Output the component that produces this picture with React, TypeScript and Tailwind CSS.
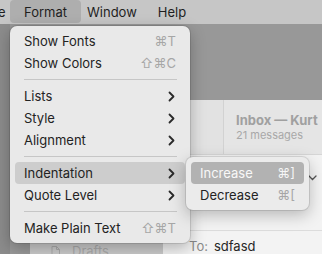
import { ReactNode } from 'react'

type MenuRow =
  | { kind: 'item'; label: string; shortcut?: string; submenu?: boolean; active?: boolean }
  | { kind: 'sep' }

const formatMenu: MenuRow[] = [
  { kind: 'item', label: 'Show Fonts', shortcut: '⌘T' },
  { kind: 'item', label: 'Show Colors', shortcut: '⇧⌘C' },
  { kind: 'sep' },
  { kind: 'item', label: 'Lists', submenu: true },
  { kind: 'item', label: 'Style', submenu: true },
  { kind: 'item', label: 'Alignment', submenu: true },
  { kind: 'sep' },
  { kind: 'item', label: 'Indentation', submenu: true, active: true },
  { kind: 'item', label: 'Quote Level', submenu: true },
  { kind: 'sep' },
  { kind: 'item', label: 'Make Plain Text', shortcut: '⇧⌘T' },
]

function Chevron() {
  return (
    <svg width="7" height="11" viewBox="0 0 7 11" className="mr-[1px]" aria-hidden="true">
      <polyline points="1.5,1.5 5.5,5.5 1.5,9.5" fill="none" stroke="#2a2a2a" strokeWidth="1.8" strokeLinecap="round" strokeLinejoin="round" />
    </svg>
  )
}

function Shortcut({ children, light }: { children: ReactNode; light?: boolean }) {
  return (
    <span className={light ? 'text-[#f6f6f6]' : 'text-[#a6a6a6]'} style={{ fontFamily: 'Inter, "DejaVu Sans", sans-serif' }}>
      {children}
    </span>
  )
}

function FileIcon() {
  return (
    <svg width="9" height="11" viewBox="0 0 9 11" aria-hidden="true">
      <path d="M1 0.5h4.5l3 3v7h-7.5z M5.5 0.5v3h3" fill="none" stroke="#ababab" strokeWidth="1" />
    </svg>
  )
}

export default function App() {
  return (
    <div
      className="relative h-[254px] w-[322px] overflow-hidden bg-[#8c8c8c] text-[13px] leading-4 text-[#232323]"
      style={{ fontFamily: 'Inter, "Liberation Sans", sans-serif' }}
    >
      {/* menu bar */}
      <div className="flex h-[24px] items-center bg-[#c6c6c6] text-[#1f1f1f]">
        <span className="-ml-[2px] w-[12px]">e</span>
        <span className="flex h-[23px] items-center self-start rounded-[4px] bg-[#aeaeae] px-[14px]">Format</span>
        <span className="ml-[6px]">Window</span>
        <span className="ml-[21px]">Help</span>
      </div>

      {/* dimmed mail window behind */}
      <div className="flex h-[230px]">
        <div className="w-[10px] bg-[#8c8c8c]" />
        <div className="flex flex-1 flex-col">
          <div className="h-[76px] bg-[#989898]" />
          <div className="flex flex-1">
            <div className="w-[20px] bg-[#999999]" />
            <div className="flex w-[133px] flex-col justify-end bg-[#cbcbcb]">
              <div className="-mb-[5px] flex items-center gap-[12px] pl-[21px] text-[#ababab]">
                <FileIcon />
                <span>Drafts</span>
              </div>
            </div>
            <div className="flex flex-1 flex-col bg-[#f3f3f3]">
              <div className="flex h-[55px] border-b border-[#d6d6d6]">
                <div className="w-[61px] border-r border-[#d2d2d2] bg-[#e2e2e2]" />
                <div className="flex-1 bg-[#e5e5e5] pl-[12px] pt-[12px]">
                  <div className="font-bold text-[#a0a0a0]">Inbox — Kurt</div>
                  <div className="text-[11px] leading-[14px] text-[#a8a8a8]">21 messages</div>
                </div>
              </div>
              <div className="flex h-[76px] items-start justify-end border-b border-[#dcdcdc] pr-[5px] pt-[20px]">
                <svg width="9" height="6" viewBox="0 0 9 6" aria-hidden="true">
                  <polyline points="1,1 4.5,4.5 8,1" fill="none" stroke="#555" strokeWidth="1.3" strokeLinecap="round" />
                </svg>
              </div>
              <div className="flex gap-[6px] pl-[26px] pt-[7px]">
                <span className="text-[#8a8a8a]">To:</span>
                <span className="text-[#262626]">sdfasd</span>
              </div>
            </div>
          </div>
        </div>
      </div>

      {/* Format menu */}
      <div className="absolute left-[10px] top-[26px] w-[180px] rounded-[7px] bg-[#e9e9e9] py-[4px] shadow-[0_5px_16px_rgba(0,0,0,0.28),0_0_0_1px_rgba(0,0,0,0.1)]">
        {formatMenu.map((row, i) =>
          row.kind === 'sep' ? (
            <div key={i} className="flex h-[11px] items-center pl-[14px] pr-[13px]">
              <div className="h-px w-full bg-[#c6c6c6]" />
            </div>
          ) : (
            <div
              key={i}
              className={`mx-[5px] flex h-[22px] items-center justify-between rounded-[4px] px-[9px] ${row.active ? 'bg-[#cdcdcd]' : ''}`}
            >
              <span>{row.label}</span>
              {row.submenu ? <Chevron /> : row.shortcut ? <Shortcut>{row.shortcut}</Shortcut> : null}
            </div>
          ),
        )}
      </div>

      {/* Indentation submenu */}
      <div className="absolute left-[186px] top-[157px] w-[123px] rounded-[7px] bg-[#ebebeb] pb-[4px] pt-[5px] shadow-[0_5px_16px_rgba(0,0,0,0.25),0_0_0_1px_rgba(0,0,0,0.1)]">
        <div className="mx-[5px] flex h-[22px] items-center justify-between rounded-[4px] bg-[#b2b2b2] px-[9px] text-[#f8f8f8]">
          <span>Increase</span>
          <Shortcut light>⌘]</Shortcut>
        </div>
        <div className="mx-[5px] flex h-[22px] items-center justify-between px-[9px]">
          <span>Decrease</span>
          <Shortcut>⌘[</Shortcut>
        </div>
      </div>
    </div>
  )
}
